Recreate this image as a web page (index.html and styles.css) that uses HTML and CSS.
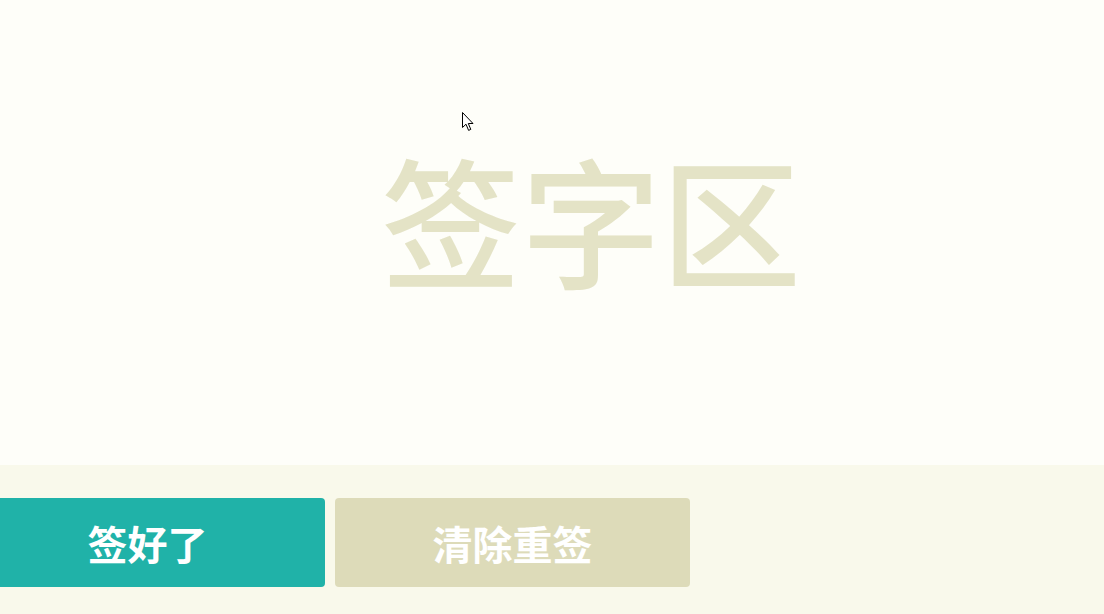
FILE: index.html
```html
<!DOCTYPE html>
<html lang="zh-CN">
<head>
<meta charset="utf-8">
<title>签字</title>
<link rel="stylesheet" href="styles.css">
</head>
<body>
<div class="page">
  <div class="sign-area">
    <div class="placeholder">签字区</div>
    <svg class="cursor" width="12" height="20" viewBox="0 0 12 20"><path d="M0.5 0.5 L0.5 15.5 L4 12.2 L6.6 18.4 L8.8 17.4 L6.3 11.5 L11 11.5 Z" fill="#fff" stroke="#000" stroke-width="1"/></svg>
  </div>
  <div class="toolbar">
    <button class="btn btn-ok">签好了</button>
    <button class="btn btn-clear">清除重签</button>
  </div>
</div>
</body>
</html>
```
FILE: styles.css
```css
html, body {
  margin: 0;
  padding: 0;
}
body {
  width: 1104px;
  height: 614px;
  overflow: hidden;
  background: #fefef9;
  font-family: "Noto Sans CJK SC", "Noto Sans", sans-serif;
}
.page {
  display: flex;
  flex-direction: column;
  height: 614px;
}
.sign-area {
  position: relative;
  height: 465px;
  flex: none;
}
.placeholder {
  padding: 140px 0 0 381px;
  font-size: 140px;
  line-height: 1.1;
  color: #e4e3c6;
  font-weight: 500;
}
.cursor {
  position: absolute;
  left: 462px;
  top: 112px;
}
.toolbar {
  flex: 1;
  background: #f9f9eb;
  display: flex;
  gap: 10px;
  padding-top: 33px;
  align-items: flex-start;
}
.btn {
  width: 355px;
  height: 89px;
  border: none;
  border-radius: 4px;
  color: #ffffff;
  font-family: "Noto Sans CJK SC", "Noto Sans", sans-serif;
  font-size: 40px;
  font-weight: 700;
  padding: 0;
  flex: none;
}
.btn-ok {
  margin-left: -30px;
  background: #20b2a8;
}
.btn-clear {
  background: #dddbb9;
}
```
